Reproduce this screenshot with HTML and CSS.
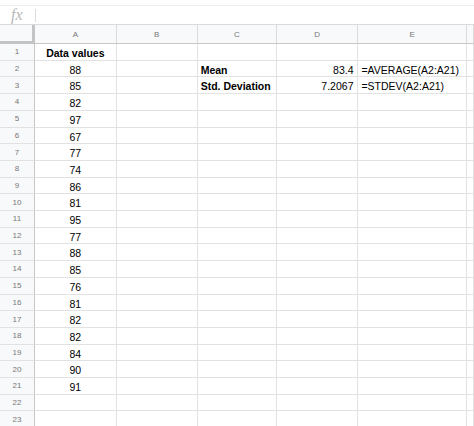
FILE: index.html
```html
<!DOCTYPE html>
<html>
<head>
<meta charset="utf-8">
<link rel="stylesheet" href="styles.css">
</head>
<body>
<div class="top-gap"></div>
<div class="formula-bar">
  <div class="fx">fx</div>
  <div class="fx-sep"></div>
  <div class="fx-input"></div>
</div>
<div class="sheet">
  <div class="corner"></div><div class="ch">A</div><div class="ch">B</div><div class="ch">C</div><div class="ch">D</div><div class="ch">E</div><div class="ch"></div>

  <div class="rh">1</div><div class="c ctr b">Data values</div><div class="c"></div><div class="c"></div><div class="c"></div><div class="c"></div><div class="c"></div>
  <div class="rh">2</div><div class="c ctr">88</div><div class="c"></div><div class="c b">Mean</div><div class="c rt">83.4</div><div class="c">=AVERAGE(A2:A21)</div><div class="c"></div>
  <div class="rh">3</div><div class="c ctr">85</div><div class="c"></div><div class="c b">Std. Deviation</div><div class="c rt">7.2067</div><div class="c">=STDEV(A2:A21)</div><div class="c"></div>
  <div class="rh">4</div><div class="c ctr">82</div><div class="c"></div><div class="c"></div><div class="c"></div><div class="c"></div><div class="c"></div>
  <div class="rh">5</div><div class="c ctr">97</div><div class="c"></div><div class="c"></div><div class="c"></div><div class="c"></div><div class="c"></div>
  <div class="rh">6</div><div class="c ctr">67</div><div class="c"></div><div class="c"></div><div class="c"></div><div class="c"></div><div class="c"></div>
  <div class="rh">7</div><div class="c ctr">77</div><div class="c"></div><div class="c"></div><div class="c"></div><div class="c"></div><div class="c"></div>
  <div class="rh">8</div><div class="c ctr">74</div><div class="c"></div><div class="c"></div><div class="c"></div><div class="c"></div><div class="c"></div>
  <div class="rh">9</div><div class="c ctr">86</div><div class="c"></div><div class="c"></div><div class="c"></div><div class="c"></div><div class="c"></div>
  <div class="rh">10</div><div class="c ctr">81</div><div class="c"></div><div class="c"></div><div class="c"></div><div class="c"></div><div class="c"></div>
  <div class="rh">11</div><div class="c ctr">95</div><div class="c"></div><div class="c"></div><div class="c"></div><div class="c"></div><div class="c"></div>
  <div class="rh">12</div><div class="c ctr">77</div><div class="c"></div><div class="c"></div><div class="c"></div><div class="c"></div><div class="c"></div>
  <div class="rh">13</div><div class="c ctr">88</div><div class="c"></div><div class="c"></div><div class="c"></div><div class="c"></div><div class="c"></div>
  <div class="rh">14</div><div class="c ctr">85</div><div class="c"></div><div class="c"></div><div class="c"></div><div class="c"></div><div class="c"></div>
  <div class="rh">15</div><div class="c ctr">76</div><div class="c"></div><div class="c"></div><div class="c"></div><div class="c"></div><div class="c"></div>
  <div class="rh">16</div><div class="c ctr">81</div><div class="c"></div><div class="c"></div><div class="c"></div><div class="c"></div><div class="c"></div>
  <div class="rh">17</div><div class="c ctr">82</div><div class="c"></div><div class="c"></div><div class="c"></div><div class="c"></div><div class="c"></div>
  <div class="rh">18</div><div class="c ctr">82</div><div class="c"></div><div class="c"></div><div class="c"></div><div class="c"></div><div class="c"></div>
  <div class="rh">19</div><div class="c ctr">84</div><div class="c"></div><div class="c"></div><div class="c"></div><div class="c"></div><div class="c"></div>
  <div class="rh">20</div><div class="c ctr">90</div><div class="c"></div><div class="c"></div><div class="c"></div><div class="c"></div><div class="c"></div>
  <div class="rh">21</div><div class="c ctr">91</div><div class="c"></div><div class="c"></div><div class="c"></div><div class="c"></div><div class="c"></div>
  <div class="rh">22</div><div class="c"></div><div class="c"></div><div class="c"></div><div class="c"></div><div class="c"></div><div class="c"></div>
  <div class="rh">23</div><div class="c"></div><div class="c"></div><div class="c"></div><div class="c"></div><div class="c"></div><div class="c"></div>
</div>
</body>
</html>
```

FILE: styles.css
```css
html, body {
  margin: 0;
  padding: 0;
  background: #ffffff;
  overflow: hidden;
}
body {
  font-family: "Liberation Sans", Arial, sans-serif;
  color: #000;
}
.top-gap {
  height: 5px;
  border-bottom: 1px solid #ececec;
}
.formula-bar {
  height: 18px;
  border-bottom: 1px solid #dadada;
  display: flex;
  align-items: center;
}
.fx {
  width: 35px;
  box-sizing: border-box;
  padding-left: 11px;
  font-family: "Liberation Serif", "Times New Roman", serif;
  font-style: italic;
  font-size: 16px;
  color: #b8b8b8;
  line-height: 18px;
}
.fx-sep {
  width: 1px;
  height: 13px;
  background: #dcdcdc;
}
.fx-input {
  flex: 1;
}
.sheet {
  display: grid;
  grid-template-columns: 35px 81.7px 81px 79.3px 81.5px 108.2px 1fr;
  grid-template-rows: 19px repeat(23, 16.71px);
}
.corner {
  background: #f8f9fa;
  border-right: 3px solid #c4c4c4;
  border-bottom: 3px solid #c4c4c4;
  box-sizing: border-box;
}
.ch {
  background: #f8f9fa;
  border-right: 1px solid #dadada;
  border-bottom: 1px solid #c8c8c8;
  box-sizing: border-box;
  color: #777;
  font-size: 8px;
  display: flex;
  align-items: center;
  justify-content: center;
}
.rh {
  background: #f8f9fa;
  border-right: 1px solid #c8c8c8;
  border-bottom: 1px solid #e2e2e2;
  box-sizing: border-box;
  color: #777;
  font-size: 8px;
  display: flex;
  align-items: center;
  justify-content: center;
}
.c {
  border-right: 1px solid #e2e2e2;
  border-bottom: 1px solid #e2e2e2;
  box-sizing: border-box;
  font-size: 10.5px;
  line-height: 12px;
  white-space: nowrap;
  overflow: visible;
  display: flex;
  align-items: flex-end;
  padding: 0 3px 0.7px 3px;
}
.ctr { justify-content: center; }
.rt { justify-content: flex-end; padding-right: 4px; }
.b { font-weight: bold; }
```
